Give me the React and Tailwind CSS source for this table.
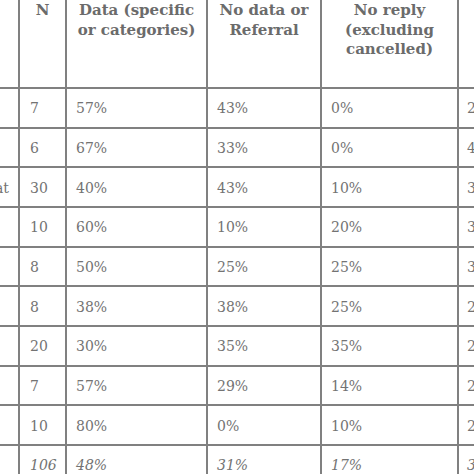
const HEADERS = [
  [],
  ["N"],
  ["Data (specific", "or categories)"],
  ["No data or", "Referral"],
  ["No reply", "(excluding", "cancelled)"],
  [],
];

const ROWS = [
  ["", "7", "57%", "43%", "0%", "2"],
  ["", "6", "67%", "33%", "0%", "4"],
  ["at", "30", "40%", "43%", "10%", "3"],
  ["", "10", "60%", "10%", "20%", "3"],
  ["", "8", "50%", "25%", "25%", "3"],
  ["", "8", "38%", "38%", "25%", "2"],
  ["", "20", "30%", "35%", "35%", "2"],
  ["", "7", "57%", "29%", "14%", "2"],
  ["", "10", "80%", "0%", "10%", "2"],
  ["", "106", "48%", "31%", "17%", "3"],
];

const COLS = "grid grid-cols-[18px_47px_141px_114px_137px_40px]";
const PAD = ["pr-[9px] justify-end", "pl-[10px]", "pl-[9px]", "pl-[9px]", "pl-[9px]", "pl-[8px]"];

export default function App() {
  return (
    <div
      className="w-[474px] h-[474px] overflow-hidden bg-white"
      style={{ fontFamily: '"DejaVu Serif", Georgia, serif' }}
    >
      <div className={`${COLS} h-[89px] border-b-2 border-[#808080]`}>
        {HEADERS.map((lines, i) => (
          <div
            key={i}
            className={`${i > 0 ? "border-l-2 border-[#808080]" : ""} pt-[1px] flex flex-col items-center whitespace-nowrap text-[15px] font-bold leading-[19.5px] text-[#6b6b6b]`}
          >
            {lines.map((l) => (
              <span key={l}>{l}</span>
            ))}
          </div>
        ))}
      </div>

      {ROWS.map((row, r) => (
        <div
          key={r}
          className={`${COLS} h-[39.67px] border-b-2 border-[#808080]`}
        >
          {row.map((c, i) => (
            <div
              key={i}
              className={`${i > 0 ? "border-l-2 border-[#808080]" : ""} ${PAD[i]} pt-[2px] flex items-center whitespace-nowrap text-[14px] text-[#737373] ${r === ROWS.length - 1 ? "italic" : ""}`}
            >
              {c}
            </div>
          ))}
        </div>
      ))}
    </div>
  );
}
